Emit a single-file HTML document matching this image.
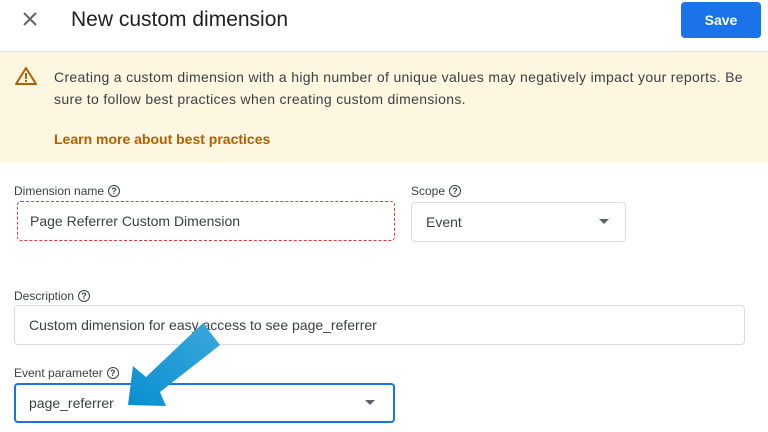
<!DOCTYPE html>
<html><head><style>
body{margin:0;width:768px;height:432px;background:#fff;font-family:"Liberation Sans",sans-serif;position:relative;overflow:hidden;color:#3c4043}
.a{position:absolute}
.lbl{font-size:12px;color:#3c4043}
.q{display:inline-block;width:10px;height:10px;border:1.5px solid #3c4043;border-radius:50%;font-size:9px;line-height:10px;text-align:center;font-weight:bold;vertical-align:1px;margin-left:4px}
.box{position:absolute;border:1px solid #dadce0;border-radius:4px;box-sizing:border-box;font-size:14px;padding-left:14px;line-height:38px;color:#3c4043}
.tri{position:absolute;width:0;height:0;border-left:5px solid transparent;border-right:5px solid transparent;border-top:5px solid #5f6368}
</style></head><body>
<svg class="a" style="left:22px;top:11px" width="16" height="16"><path d="M2 2 L14 14 M14 2 L2 14" stroke="#5f6368" stroke-width="2"/></svg>
<div class="a" style="left:71px;top:8px;font-size:21px;color:#202124">New custom dimension</div>
<div class="a" style="left:681px;top:2px;width:80px;height:36px;background:#1a73e8;border-radius:4px;color:#fff;font-size:14px;font-weight:bold;text-align:center;line-height:36px">Save</div>
<div class="a" style="left:0;top:51px;width:768px;height:1px;background:#e0e0e0"></div>
<div class="a" style="left:0;top:52px;width:768px;height:111px;background:#fdf6e0"></div>
<svg class="a" style="left:14px;top:66px" width="24" height="20" viewBox="0 0 24 20"><path d="M12 2 L22 18 L2 18 Z" fill="none" stroke="#b06000" stroke-width="2" stroke-linejoin="round"/><rect x="11" y="7" width="2" height="6" fill="#b06000"/><rect x="11" y="14" width="2" height="2" fill="#b06000"/></svg>
<div class="a" style="left:54px;top:66px;font-size:14px;line-height:22px;color:#3c4043;width:710px;letter-spacing:0.33px;white-space:nowrap">Creating a custom dimension with a high number of unique values may negatively impact your reports. Be<br>sure to follow best practices when creating custom dimensions.</div>
<div class="a" style="left:54px;top:131px;font-size:14px;color:#b06000;font-weight:bold">Learn more about best practices</div>
<div class="a lbl" style="left:14px;top:184px">Dimension name<span class="q">?</span></div>
<div class="box" style="left:17px;top:201px;width:378px;height:40px;border:1.5px dashed #e53935;padding-left:12px">Page Referrer Custom Dimension</div>
<div class="a lbl" style="left:411px;top:184px">Scope<span class="q">?</span></div>
<div class="box" style="left:411px;top:202px;width:215px;height:40px">Event</div>
<div class="tri" style="left:599px;top:219px"></div>
<div class="a lbl" style="left:14px;top:289px">Description<span class="q">?</span></div>
<div class="box" style="left:14px;top:305px;width:731px;height:40px">Custom dimension for easy access to see page_referrer</div>
<div class="a lbl" style="left:14px;top:366px">Event parameter<span class="q">?</span></div>
<div class="box" style="left:14px;top:383px;width:381px;height:40px;border:2px solid #1a73e8;padding-left:13px;line-height:36px">page_referrer</div>
<div class="tri" style="left:365px;top:400px"></div>
<svg class="a" style="left:0;top:0" width="768" height="432"><defs><linearGradient id="g" x1="1" y1="0" x2="0" y2="1"><stop offset="0" stop-color="#3aa8dc"/><stop offset="1" stop-color="#0a8fd0"/></linearGradient></defs><polygon points="203,323 220,345 160,392 166,406 128,405 133,366 146,377" fill="url(#g)"/></svg>
</body></html>
